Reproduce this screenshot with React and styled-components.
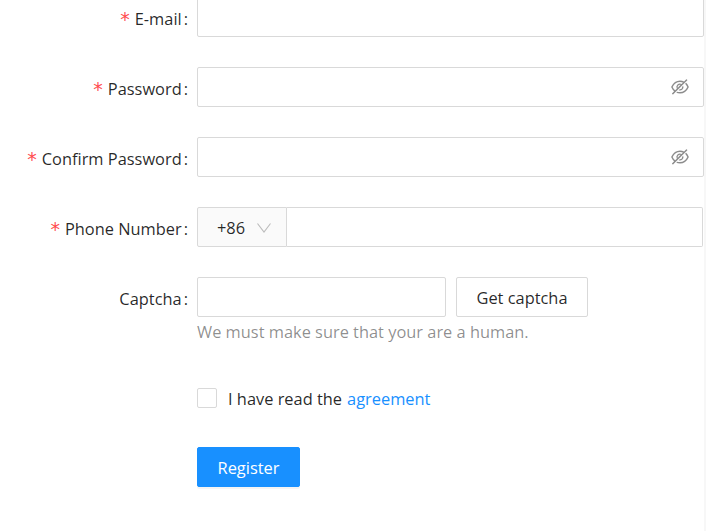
import React from "react";
import styled, { createGlobalStyle } from "styled-components";

const Global = createGlobalStyle`
  html, body { margin: 0; padding: 0; background: #f7f7f7; overflow: hidden; }
  body { font-family: "Open Sans", "Noto Sans", sans-serif; font-size: 16.4px; color: rgba(0,0,0,0.85); }
`;

const Form = styled.form`
  width: 704px;
  height: 531px;
  background: #fff;
  overflow: hidden;
  display: flex;
  flex-direction: column;
`;

const Row = styled.div`
  display: grid;
  flex: none;
  grid-template-columns: 197px 1fr;
  margin-top: ${(p) => p.$top ?? 0}px;
  margin-bottom: ${(p) => p.$gap ?? 30}px;
`;

const Label = styled.label`
  height: 40px;
  box-sizing: border-box;
  padding: 3px 8px 0 0;
  display: flex;
  align-items: center;
  justify-content: flex-end;
  white-space: nowrap;
`;

const Mark = styled.span`
  color: #ff4d4f;
  margin-right: 5px;
  padding-top: 2px;
  font-family: "DejaVu Sans", sans-serif;
  font-size: 19px;
  line-height: 19px;
`;

const Colon = styled.span`
  margin-left: 2px;
  margin-right: 1px;
`;

const Control = styled.div`
  display: flex;
  min-width: 0;
`;

const Field = styled.div`
  height: 40px;
  box-sizing: border-box;
  border: 1px solid #d9d9d9;
  border-radius: 2px;
  background: #fff;
  flex: 1;
  display: flex;
  align-items: center;
  justify-content: flex-end;
  padding-right: 14px;
`;

const Eye = styled.svg`
  width: 18px;
  height: 18px;
  fill: rgba(0,0,0,0.45);
`;

const Prefix = styled.div`
  width: 90px;
  height: 40px;
  box-sizing: border-box;
  border: 1px solid #d9d9d9;
  border-radius: 2px 0 0 2px;
  background: #fafafa;
  padding: 1px 0 0 19px;
  display: flex;
  align-items: center;
  gap: 12px;
`;

const Chevron = styled.svg`
  width: 14px;
  height: 14px;
  fill: none;
  stroke: rgba(0,0,0,0.25);
  stroke-width: 1.1;
`;

const PhoneField = styled(Field)`
  border-left: 0;
  border-radius: 0 2px 2px 0;
  margin-right: 1px;
`;

const CaptchaField = styled(Field)`
  flex: 0 0 249px;
`;

const CaptchaGrid = styled.div`
  display: flex;
  gap: 10px;
`;

const GhostButton = styled.button`
  height: 40px;
  width: 132px;
  box-sizing: border-box;
  padding: 1px 0 0;
  border: 1px solid #d9d9d9;
  border-radius: 2px;
  background: #fff;
  font: inherit;
  color: rgba(0,0,0,0.85);
`;

const Stack = styled.div`
  display: flex;
  flex-direction: column;
`;

const Help = styled.div`
  color: rgba(0,0,0,0.45);
  height: 30px;
  line-height: 30px;
`;

const Agreement = styled.div`
  grid-column: 2;
  height: 22px;
  display: flex;
  align-items: center;
`;

const Box = styled.span`
  width: 20px;
  height: 20px;
  box-sizing: border-box;
  border: 1px solid #d9d9d9;
  border-radius: 2px;
  margin-right: 11px;
`;

const Link = styled.a`
  color: #1890ff;
  margin-left: 5px;
`;

const Primary = styled.button`
  grid-column: 2;
  justify-self: start;
  width: 103px;
  height: 40px;
  padding: 0;
  border: 1px solid #1890ff;
  border-radius: 2px;
  background: #1890ff;
  color: #fff;
  font: inherit;
  box-shadow: 0 2px 0 rgba(0,0,0,0.045);
`;

const EyeIcon = () => (
  <Eye viewBox="64 64 896 896">
    <path d="M942.2 486.2Q889.47 375.11 816.7 305l-50.88 50.88C807.31 395.53 843.45 447.4 874.7 512 791.5 684.2 673.4 766 512 766q-72.67 0-133.87-22.38L323 798.75Q408 838 512 838q288.3 0 430.2-300.3a60.29 60.29 0 000-51.5zm-63.57-320.64L836 122.88a8 8 0 00-11.32 0L715.31 232.2Q624.86 186 512 186q-288.3 0-430.2 300.3a60.3 60.3 0 000 51.5q56.69 119.4 136.5 191.41L112.48 835a8 8 0 000 11.31L155.17 889a8 8 0 0011.31 0l712.15-712.12a8 8 0 000-11.32zM149.3 512C232.6 339.8 350.7 258 512 258c54.54 0 104.13 9.36 149.12 28.39l-70.3 70.3a176 176 0 00-238.13 238.13l-83.42 83.42C223.1 637.49 183.3 582.28 149.3 512zm246.7 0a112.11 112.11 0 01146.2-106.69L401.31 546.2A112 112 0 01396 512z" />
    <path d="M508 624c-3.46 0-6.87-.16-10.25-.47l-52.82 52.82a176.09 176.09 0 00227.42-227.42l-52.82 52.82c.31 3.38.47 6.79.47 10.25a111.94 111.94 0 01-112 112z" />
  </Eye>
);

const FieldLabel = ({ required, children }) => (
  <Label>
    {required && <Mark>*</Mark>}
    {children}
    <Colon>:</Colon>
  </Label>
);

export default function App() {
  return (
    <>
      <Global />
      <Form>
        <Row $top={-3}>
          <FieldLabel required>E-mail</FieldLabel>
          <Control><Field /></Control>
        </Row>
        <Row>
          <FieldLabel required>Password</FieldLabel>
          <Control><Field><EyeIcon /></Field></Control>
        </Row>
        <Row>
          <FieldLabel required>Confirm Password</FieldLabel>
          <Control><Field><EyeIcon /></Field></Control>
        </Row>
        <Row>
          <FieldLabel required>Phone Number</FieldLabel>
          <Control>
            <Prefix>
              +86
              <Chevron viewBox="0 0 14 14"><path d="M.5 2.5L7 11l6.5-8.5" /></Chevron>
            </Prefix>
            <PhoneField />
          </Control>
        </Row>
        <Row $gap={40}>
          <FieldLabel>Captcha</FieldLabel>
          <Stack>
            <CaptchaGrid>
              <CaptchaField />
              <GhostButton type="button">Get captcha</GhostButton>
            </CaptchaGrid>
            <Help>We must make sure that your are a human.</Help>
          </Stack>
        </Row>
        <Row $gap={38}>
          <Agreement>
            <Box />
            I have read the<Link>agreement</Link>
          </Agreement>
        </Row>
        <Row>
          <Primary type="button">Register</Primary>
        </Row>
      </Form>
    </>
  );
}
